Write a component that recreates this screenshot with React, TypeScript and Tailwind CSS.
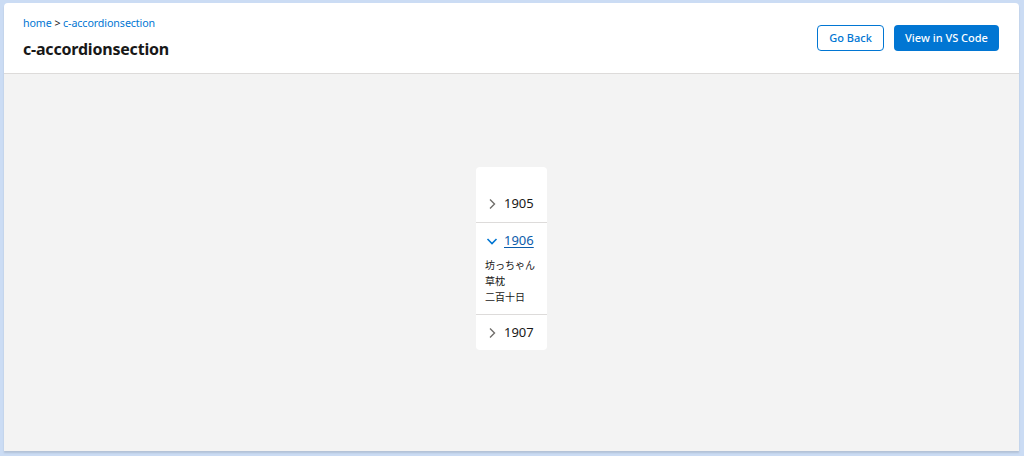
export default function App() {
  const sections = [
    { title: "1905", open: false, items: [] as string[] },
    { title: "1906", open: true, items: ["坊っちゃん", "草枕", "二百十日"] },
    { title: "1907", open: false, items: [] as string[] },
  ];

  return (
    <div
      className="flex h-screen w-full flex-col bg-[#cbdcf4] pb-[5px] pl-[4px] pr-[5px] pt-[3px]"
      style={{ fontFamily: '"Noto Sans", "Noto Sans CJK JP", sans-serif' }}
    >
      <div className="flex flex-1 flex-col overflow-hidden rounded-t-[4px] shadow-[0_2px_2px_rgba(0,0,0,0.12)]">
        <header className="flex h-[71px] items-start justify-between border-b border-[#dddbda] bg-white pl-[19px] pr-[20px]">
          <div className="pt-[13px]">
            <div className="text-[10.7px] leading-[14px] tracking-[-0.1px] text-[#0176d3]">
              home <span className="text-[#181818]">&gt;</span> c-accordionsection
            </div>
            <h1 className="mt-[9px] text-[16px] font-bold leading-[20px] tracking-[-0.2px] text-[#181818]">
              c-accordionsection
            </h1>
          </div>
          <div className="flex gap-[10px] pt-[22px]">
            <button className="h-[26px] w-[67px] rounded-[4px] border border-[#0176d3] bg-white text-[11px] font-medium text-[#0176d3]">
              Go Back
            </button>
            <button className="h-[26px] w-[105px] rounded-[4px] bg-[#0176d3] text-[11px] font-medium text-white">
              View in VS Code
            </button>
          </div>
        </header>
        <main className="flex flex-1 justify-center bg-[#f3f3f3] pt-[93px]">
          <div className="h-fit w-[71px] rounded-[4px] bg-white pt-[19px]">
            {sections.map((s, i) => (
              <div key={s.title} className={i > 0 ? "border-t border-[#dddbda]" : ""}>
                <div className={`flex items-center gap-[6px] pl-[10px] ${i === 2 ? "h-[35px]" : "h-[36px]"}`}>
                  {s.open ? (
                    <svg width="12" height="12" viewBox="0 0 12 12" className="text-[#0176d3]">
                      <path d="M1.5 4 L6 8.5 L10.5 4" fill="none" stroke="currentColor" strokeWidth="1.6" />
                    </svg>
                  ) : (
                    <svg width="12" height="12" viewBox="0 0 12 12" className="text-[#706e6b]">
                      <path d="M4 1.5 L8.5 6 L4 10.5" fill="none" stroke="currentColor" strokeWidth="1.4" />
                    </svg>
                  )}
                  <span
                    className={
                      s.open
                        ? "text-[13px] text-[#0b5cab] underline underline-offset-2"
                        : "text-[13px] text-[#181818]"
                    }
                  >
                    {s.title}
                  </span>
                </div>
                {s.open && (
                  <div className="-mt-[2px] pb-[9px] pl-[9px] text-[10px] leading-[16px] text-[#181818]">
                    {s.items.map((t) => (
                      <div key={t}>{t}</div>
                    ))}
                  </div>
                )}
              </div>
            ))}
          </div>
        </main>
      </div>
    </div>
  );
}
